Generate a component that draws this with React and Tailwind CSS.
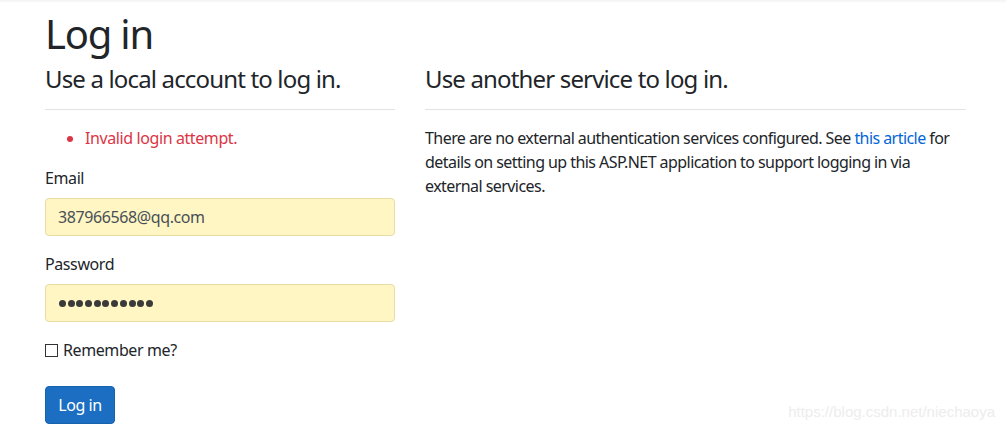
import React from "react";

export default function App() {
  return (
    <div className="relative min-h-[433px] bg-white text-[#212529] font-['Noto_Sans',sans-serif] tracking-[-0.025em]">
      <div className="h-[3px] bg-gradient-to-b from-[#f2f2f2] to-white" />

      <div className="flex pl-[45px] gap-[30px]">
        {/* local account */}
        <section className="w-[350px] shrink-0">
          <h1 className="text-[40px] leading-[48px] font-normal mt-[7px] mb-[6px] tracking-[-0.03em]">Log in</h1>
          <h4 className="text-[24px] leading-[29px] font-normal tracking-[-0.035em]">Use a local account to log in.</h4>
          <hr className="mt-[16px] mb-[16px] border-t border-[#e3e3e3]" />

          <ul className="text-[#dc3545] text-[16px] leading-[24px] list-disc pl-[40px] marker:text-[#dc3545]">
            <li>Invalid login attempt.</li>
          </ul>

          <div className="mt-[16px]">
            <label className="block text-[16px] leading-[24px] mb-[8px]">Email</label>
            <div className="h-[38px] rounded-[4px] border border-[#e7dca3] bg-[#fff6c4] px-[12px] flex items-center text-[16px] text-[#495057]">
              387966568@qq.com
            </div>
          </div>

          <div className="mt-[16px]">
            <label className="block text-[16px] leading-[24px] mb-[8px]">Password</label>
            <div className="h-[38px] rounded-[4px] border border-[#e7dca3] bg-[#fff6c4] pl-[13px] flex items-center gap-[1.7px]">
              {Array.from({ length: 11 }).map((_, i) => (
                <span key={i} className="w-[7px] h-[7px] rounded-full bg-[#3a3a3a]" />
              ))}
            </div>
          </div>

          <div className="mt-[16px] flex items-center gap-[5px] text-[16px] leading-[24px]">
            <span className="w-[13px] h-[13px] border border-[#333] bg-white" />
            <span>Remember me?</span>
          </div>

          <button className="mt-[24px] h-[38px] w-[70px] rounded-[4px] bg-[#1b6ec2] border border-[#1861ac] text-white text-[16px]">
            Log in
          </button>
        </section>

        {/* external */}
        <section className="w-[541px] shrink-0 pt-[61px]">
          <h4 className="text-[24px] leading-[29px] font-normal tracking-[-0.035em]">Use another service to log in.</h4>
          <hr className="mt-[16px] mb-[16px] border-t border-[#e3e3e3]" />
          <p className="text-[16px] leading-[24px] tracking-[-0.035em]">
            There are no external authentication services configured. See{" "}
            <a className="text-[#0366d6]">this article</a> for details on setting up this ASP.NET
            application to support logging in via external services.
          </p>
        </section>
      </div>

      <span className="absolute right-[11px] bottom-[10px] text-[#ededed] text-[15px] tracking-normal font-['Liberation_Sans',sans-serif]">
        https://blog.csdn.net/niechaoya
      </span>
    </div>
  );
}
